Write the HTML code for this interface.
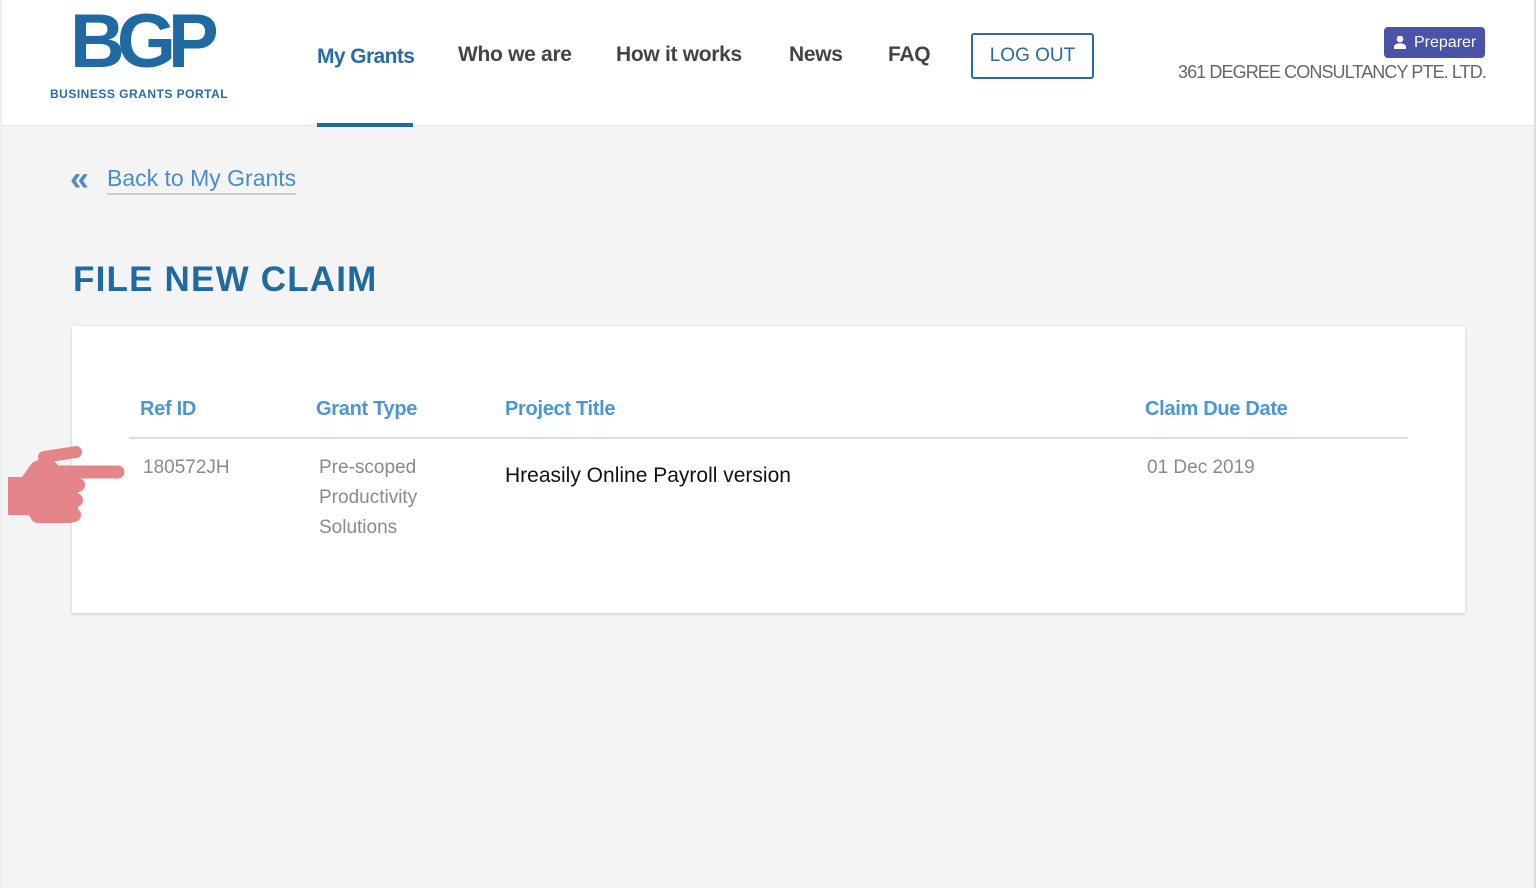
<!DOCTYPE html>
<html><head><meta charset="utf-8"><style>
*{margin:0;padding:0;box-sizing:border-box}
body{width:1536px;height:888px;background:#f4f4f4;font-family:"Liberation Sans",sans-serif;position:relative;overflow:hidden}
.hdr{position:absolute;left:0;top:0;width:1536px;height:126px;background:#fff;border-bottom:1px solid #e6e6e6}
.a{position:absolute;white-space:nowrap}
.nav{font-size:21px;font-weight:bold;color:#444;letter-spacing:-0.3px}
.th{font-size:20px;font-weight:bold;color:#4a97d2;letter-spacing:-0.3px}
.td{font-size:19px;color:#8a8a8a;line-height:30px}
</style></head><body>
<div class="hdr">
  <div class="a" style="left:70px;top:2px;font-family:'Liberation Sans',sans-serif;font-size:76px;color:#1f6aa3;letter-spacing:-8px;font-weight:bold;line-height:80px">BGP</div>
  <div class="a" style="left:50px;top:87px;font-size:12px;font-weight:bold;color:#2a6aa6;letter-spacing:0.5px">BUSINESS GRANTS PORTAL</div>
  <div class="a nav" style="left:317px;top:45px;color:#2a6aa6;letter-spacing:-0.6px">My Grants</div>
  <div class="a" style="left:317px;top:123px;width:96px;height:4px;background:#1f6aa3"></div>
  <div class="a nav" style="left:458px;top:43px">Who we are</div>
  <div class="a nav" style="left:616px;top:43px">How it works</div>
  <div class="a nav" style="left:789px;top:43px">News</div>
  <div class="a nav" style="left:888px;top:43px">FAQ</div>
  <div class="a" style="left:971px;top:33px;width:123px;height:46px;border:2px solid #2a6aa6;border-radius:3px;color:#2a6aa6;font-size:19px;text-align:center;line-height:42px">LOG OUT</div>
  <div class="a" style="left:1384px;top:27px;width:101px;height:31px;background:#4b53a8;border-radius:4px;color:#fff;font-size:16px;line-height:31px;padding-left:30px">Preparer
    <svg style="position:absolute;left:9px;top:8px" width="14" height="14" viewBox="0 0 14 14"><circle cx="7" cy="4" r="3.3" fill="#fff"/><path d="M1 14v-2c0-2.5 3-3.8 6-3.8s6 1.3 6 3.8v2z" fill="#fff"/></svg></div>
  <div class="a" style="left:1178px;top:62px;font-size:18px;color:#666;letter-spacing:-0.9px">361 DEGREE CONSULTANCY PTE. LTD.</div>
</div>
<div class="a" style="right:0;top:0;width:2px;height:888px;background:#ddd"></div>
<div class="a" style="left:0;top:0;width:2px;height:888px;background:#eee"></div>
<div class="a" style="left:70px;top:160px;font-size:34px;color:#4a8ccb;font-weight:bold">«</div>
<div class="a" style="left:107px;top:165px;font-size:23px;color:#4a8ccb;border-bottom:2px solid #ccc;padding-bottom:1px">Back to My Grants</div>
<div class="a" style="left:73px;top:260px;font-size:35px;font-weight:bold;color:#1f6aa3;letter-spacing:1.2px">FILE NEW CLAIM</div>
<div class="a" style="left:72px;top:326px;width:1393px;height:287px;background:#fff;box-shadow:0 1px 3px rgba(0,0,0,0.18)"></div>
<div class="a th" style="left:140px;top:398px">Ref ID</div>
<div class="a th" style="left:316px;top:398px">Grant Type</div>
<div class="a th" style="left:505px;top:398px">Project Title</div>
<div class="a th" style="left:1145px;top:398px">Claim Due Date</div>
<div class="a" style="left:129px;top:437px;width:1279px;height:2px;background:#ddd"></div>
<div class="a td" style="left:143px;top:453px">180572JH</div>
<div class="a td" style="left:319px;top:453px">Pre-scoped<br>Productivity<br>Solutions</div>
<div class="a" style="left:505px;top:464px;font-size:21px;color:#111">Hreasily Online Payroll version</div>
<div class="a td" style="left:1147px;top:453px">01 Dec 2019</div>
<svg class="a" style="left:8px;top:445px" width="118" height="80" viewBox="0 0 118 80">
<g fill="#e5858a" stroke="#e5858a" stroke-linecap="round">
<line x1="36" y1="12" x2="68" y2="7" stroke-width="12"/>
<line x1="44" y1="27" x2="110" y2="27" stroke-width="13"/>
<path d="M0 32h14l10-14 16-8 10 10-4 14v38l-8 6H32l-12-8H0z" stroke="none"/>
<rect x="22" y="26" width="48" height="52" rx="8" stroke="none"/>
<circle cx="70" cy="40" r="7" stroke="none"/>
<circle cx="68" cy="55" r="7" stroke="none"/>
<circle cx="66" cy="70" r="7" stroke="none"/>
</g></svg>
</body></html>
